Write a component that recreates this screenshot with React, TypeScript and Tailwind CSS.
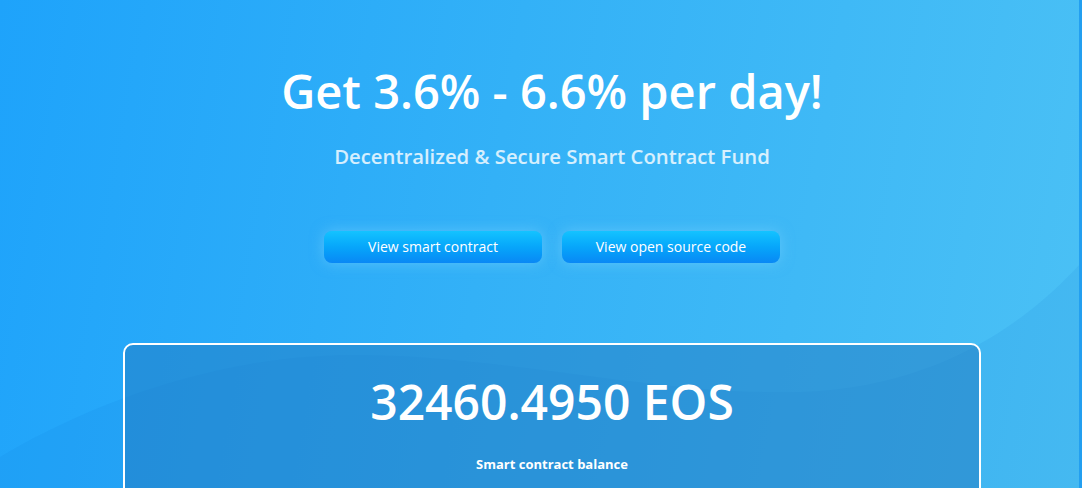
const font = { fontFamily: '"Open Sans", "Noto Sans", sans-serif' };

const Wave = () => (
  <svg
    className="absolute inset-0 h-full w-full"
    viewBox="0 0 1082 488"
    preserveAspectRatio="none"
  >
    <path
      d="M0,457 C70,415 200,356 350,355 C500,354 660,396 800,392 C930,388 1020,330 1082,262 L1082,488 L0,488 Z"
      fill="#0a6fd0"
      fillOpacity="0.09"
    />
  </svg>
);

export default function App() {
  return (
    <div
      className="relative h-[488px] w-full overflow-hidden bg-[linear-gradient(100deg,#1ea3fb_0%,#33b1f7_45%,#4bc1f5_100%)]"
      style={font}
    >
      <Wave />
      <div className="absolute right-0 top-0 h-full w-[3px] bg-[#239ff0]" />

      <div className="relative flex flex-col items-center pl-[22px] pt-[58px]">
        <h1 className="text-[47px] font-semibold leading-[66px] text-white">
          Get 3.6% - 6.6% per day!
        </h1>
        <p className="mt-[18px] text-[20.3px] font-semibold leading-[28px] text-white/80">
          Decentralized &amp; Secure Smart Contract Fund
        </p>

        <div className="mt-[61px] flex gap-5">
          <button className="h-8 w-[218px] rounded-lg bg-gradient-to-b from-[#14c3ff] to-[#0a88f5] text-sm text-white shadow-[0_0_14px_rgba(120,210,255,0.55)]">
            View smart contract
          </button>
          <button className="h-8 w-[218px] rounded-lg bg-gradient-to-b from-[#14c3ff] to-[#0a88f5] text-sm text-white shadow-[0_0_14px_rgba(120,210,255,0.55)]">
            View open source code
          </button>
        </div>

        <div className="mt-[80px] flex h-[200px] w-[858px] flex-col items-center rounded-[10px] border-2 border-white bg-[#227ac0]/50 pt-[22px]">
          <div className="text-[48px] font-semibold leading-[70px] text-white">
            32460.4950 EOS
          </div>
          <div className="mt-[18px] text-[13px] font-bold text-white">
            Smart contract balance
          </div>
        </div>
      </div>
    </div>
  );
}
